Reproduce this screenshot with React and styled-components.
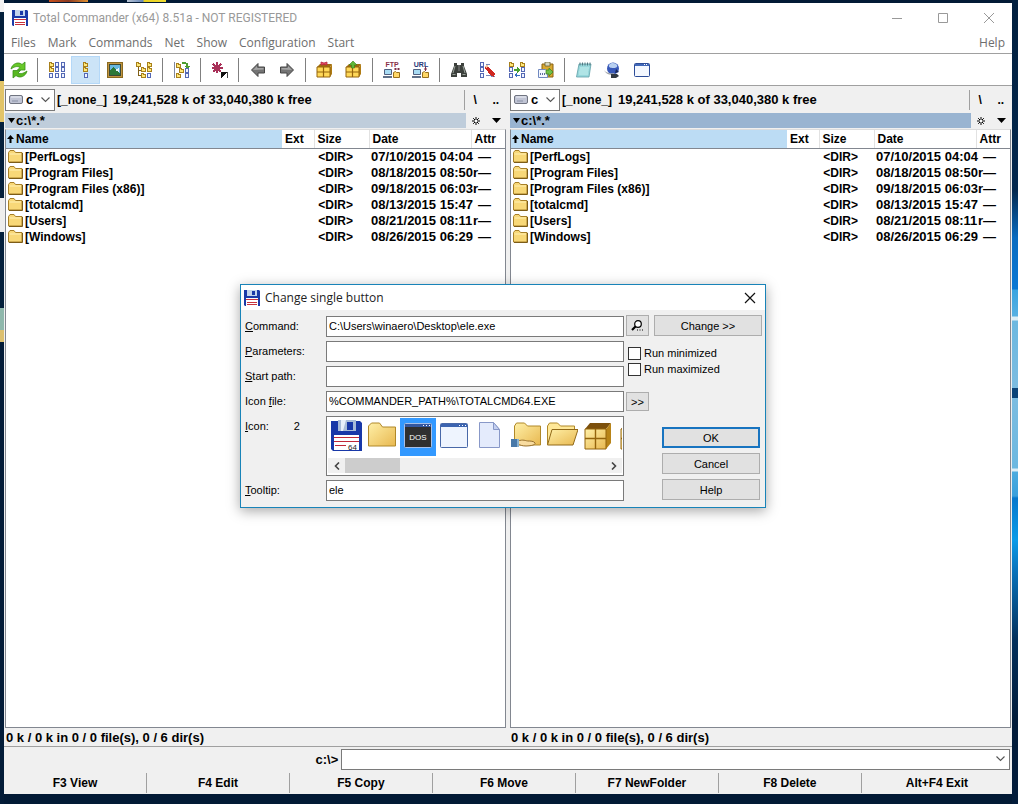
import styled, { createGlobalStyle, css } from "styled-components";

const GlobalStyle = createGlobalStyle`
  * {
    box-sizing: border-box;
  }

  body {
    margin: 0;
    font-family: "Liberation Sans", Arial, sans-serif;
    font-size: 12px;
    color: #000;
  }

  button, input, select {
    font: inherit;
    color: inherit;
    margin: 0;
    padding: 0;
    border: 0;
    border-radius: 0;
    background: transparent;
  }

  svg {
    display: block;
    flex: none;
  }
`;

/* ---------- desktop and main window ---------- */

const Desktop = styled.div`
  min-height: 100vh;
  display: flex;
  padding: 3px 6px 10px 4px;
  background-color: #021a35;
  background-image: linear-gradient(90deg, #c8501c, #8c3a20 50%, #e09030),
    linear-gradient(90deg, #b8c4d4, #6888b8 40%, #e8d020 45%, #f0dc30),
    linear-gradient(
      180deg,
      #f2f2f2 12px,
      #04203c 12px 81px,
      #e2c468 81px 122px,
      #04203c 122px 198px,
      #eee 198px 232px,
      #04203c 232px 308px,
      #8fb8ac 308px 330px,
      #dcc070 330px 342px,
      #031c38 342px
    ),
    linear-gradient(
      180deg,
      #02203f 0,
      #03284e 190px,
      #0a6cc0 238px,
      #0a78d4 289px,
      #3aa4e0 290px,
      #56b0e2 316px,
      #dceef6 317px 320px,
      #6cb8e0 321px,
      #7cbce0 388px,
      #0b4478 388px 398px,
      #7cbce0 398px,
      #6cb8e0 468px,
      #dceef6 469px 471px,
      #4cacdf 472px,
      #3aa0dc 496px,
      #0878cc 498px,
      #0a9be8 540px,
      #0a74bc 570px,
      #03305c 640px,
      #021c3a 720px
    );
  background-repeat: no-repeat;
  background-size: 39px 2px, 39px 2px, 4px 100%, 6px 100%;
  background-position: 49px 0, 127px 0, 0 0, 100% 0;
`;

const Window = styled.main`
  flex: 1;
  min-width: 0;
  display: flex;
  flex-direction: column;
  background: #f0f0f0;
`;

const TitleBar = styled.header`
  display: flex;
  align-items: center;
  height: 29px;
  padding-left: 8px;
  background: #fff;
  color: #999;
  font-family: Roboto, "Open Sans", sans-serif;
`;

const TitleText = styled.h1`
  flex: 1;
  margin: 0 0 0 5px;
  font-size: 12px;
  font-weight: 400;
`;

const CaptionButton = styled.button`
  width: 46px;
  height: 28px;
  display: flex;
  align-items: center;
  justify-content: center;
`;

const MenuBar = styled.nav`
  display: flex;
  gap: 12px;
  height: 22px;
  padding: 0 7px;
  background: #fff;
  border-bottom: 1px solid #a0a0a0;
  color: #6d6d6d;
  font-family: "Open Sans", "Noto Sans", sans-serif;
  font-size: 12px;
`;

const MenuItem = styled.button`
  height: 21px;
  line-height: 21px;
  ${(props) =>
    props.$last &&
    css`
      margin-left: auto;
    `}
`;

const ToolBar = styled.div`
  display: flex;
  align-items: center;
  height: 32px;
  background: #fff;
  border-bottom: 1px solid #a0a0a0;
`;

const ToolButton = styled.button`
  width: 29px;
  height: 28px;
  display: flex;
  align-items: center;
  justify-content: center;
  border: 1px solid ${(props) => (props.$active ? "#b4d8f8" : "transparent")};
  background: ${(props) => (props.$active ? "#cce4f7" : "transparent")};
`;

const ToolDivider = styled.span`
  width: 1px;
  height: 24px;
  margin: 0 4px;
  background: #808080;
`;

/* ---------- file panels ---------- */

const Panels = styled.div`
  flex: 1;
  display: grid;
  grid-template-columns: 1fr 1fr;
  gap: 4px;
  padding: 1px 1px 0;
`;

const Panel = styled.section`
  display: flex;
  flex-direction: column;
  min-width: 0;
  font-weight: 700;
`;

const DriveRow = styled.div`
  display: flex;
  align-items: center;
  height: 25px;
`;

const DriveBox = styled.label`
  display: flex;
  align-items: center;
  width: 50px;
  height: 22px;
  padding: 0 4px 0 3px;
  background: #fff;
  border: 1px solid #7a7a7a;
`;

const DriveSelect = styled.select`
  flex: 1;
  min-width: 0;
  padding-left: 3px;
  appearance: none;
  font-size: 13px;
  outline: none;
`;

const FreeSpace = styled.p`
  flex: 1;
  display: flex;
  gap: 6px;
  margin: 0;
  padding-left: 2px;
  font-size: 13px;
  line-height: 16px;
  white-space: nowrap;

  span {
    font-size: 12px;
  }
`;

const PanelButtons = styled.div`
  display: flex;
  align-items: center;
  justify-content: space-around;
  width: ${(props) => (props.$line ? "42px" : "40px")};
  height: 20px;
  border-left: ${(props) => (props.$line ? "1px solid #a0a0a0" : "0")};
`;

const SmallButton = styled.button`
  width: 18px;
  height: 16px;
  display: flex;
  align-items: center;
  justify-content: center;
  font-weight: 700;
`;

const PathRow = styled.div`
  display: flex;
  align-items: center;
  height: 17px;
`;

const PathBar = styled.div`
  flex: 1;
  display: flex;
  align-items: center;
  gap: 1px;
  height: 15px;
  padding-left: 3px;
  background: ${(props) => (props.$active ? "#99b4d1" : "#bfcddb")};
  font-size: 13px;
  line-height: 15px;
`;

const ListBox = styled.div`
  flex: 1;
  background: #fff;
  border: 1px solid #828790;
  border-top-color: #dcdcdc;
`;

const FileTable = styled.table`
  width: 100%;
  table-layout: fixed;
  border-collapse: collapse;
`;

const HeadCell = styled.th`
  width: ${(props) => props.$width || "auto"};
  height: 18px;
  padding: 0 0 0 3px;
  text-align: left;
  white-space: nowrap;
  border-bottom: 1px solid #828790;
  border-left: ${(props) => (props.$line ? "1px solid #e2e2e2" : "0")};
  background: ${(props) => (props.$sorted ? "#bcdcf4" : "#fff")};

  div {
    display: flex;
    align-items: center;
    gap: 2px;
    margin-left: -2px;
  }
`;

const FileRow = styled.tr`
  height: 16px;
`;

const Cell = styled.td`
  padding: 0;
  height: 16px;
  line-height: 16px;
  white-space: nowrap;
`;

const NameCell = styled(Cell)`
  div {
    display: flex;
    align-items: center;
    gap: 2px;
    padding-left: 2px;
  }
`;

const SizeCell = styled(Cell)`
  padding-right: 16px;
  text-align: right;
`;

const DateCell = styled(Cell)`
  padding-left: 2px;
  font-size: 13px;
`;

const AttrCell = styled(Cell)`
  padding-right: 14px;
  text-align: right;
  font-size: 13px;
`;

const StatusLine = styled.p`
  margin: 0;
  height: 18px;
  padding-left: 1px;
  font-size: 13px;
  font-weight: 700;
  line-height: 20px;
`;

/* ---------- bottom bars ---------- */

const CommandRow = styled.form`
  display: grid;
  grid-template-columns: 1fr 2fr;
  align-items: center;
  gap: 3px;
  height: 25px;
  padding-right: 2px;
  border-top: 1px solid #a0a0a0;
  font-size: 13px;
  font-weight: 700;

  label {
    text-align: right;
  }
`;

const CommandBox = styled.div`
  display: flex;
  align-items: center;
  height: 21px;
  background: #fff;
  border: 1px solid #7a7a7a;

  input {
    flex: 1;
    min-width: 0;
    height: 100%;
    padding: 0 4px;
    outline: none;
  }

  button {
    padding: 0 4px;
  }
`;

const FunctionBar = styled.footer`
  display: grid;
  grid-template-columns: repeat(6, 1fr) 1.05fr;
  height: 23px;
  padding: 2px 0 1px;
`;

const FunctionKey = styled.button`
  font-size: 12px;
  font-weight: 700;
  border-right: 1px solid #a0a0a0;

  &:last-child {
    border-right: 0;
  }
`;

/* ---------- dialog ---------- */

const Dialog = styled.section`
  position: absolute;
  left: 240px;
  top: 284px;
  width: 526px;
  background: #f0f0f0;
  border: 1px solid #1883b8;
  box-shadow: 0 3px 12px rgba(0, 0, 0, 0.35);
  font-size: 11px;
`;

const DialogTitle = styled.header`
  display: flex;
  align-items: center;
  height: 25px;
  padding: 0 9px 0 3px;
  background: #fff;
  font-family: "Open Sans", "Noto Sans", sans-serif;

  h2 {
    flex: 1;
    margin: 0 0 0 5px;
    font-size: 12px;
    font-weight: 400;
    color: #222;
  }
`;

const DialogBody = styled.form`
  display: flex;
`;

const Fields = styled.div`
  flex: 1;
  display: grid;
  grid-template-columns: 81px 1fr;
  row-gap: 4px;
  padding: 6px 2px 6px 4px;
`;

const FieldLabel = styled.label`
  line-height: 21px;

  span {
    margin-left: 25px;
  }
`;

const TextField = styled.input`
  width: 100%;
  height: 21px;
  padding: 0 2px 2px;
  background: #fff;
  border: 1px solid #7a7a7a;
  outline: none;
`;

const IconPicker = styled.div`
  height: 60px;
  padding: 1px 1px 2px;
  background: #fff;
  border: 1px solid #7a7a7a;
  overflow: hidden;
`;

const IconStrip = styled.div`
  display: flex;
  height: 40px;
  overflow: hidden;
`;

const IconChoice = styled.button`
  flex: none;
  width: 36px;
  height: 38px;
  display: flex;
  justify-content: center;
  padding-top: 2px;
  background: ${(props) => (props.$active ? "#3399ff" : "transparent")};
`;

const ScrollBar = styled.div`
  display: flex;
  height: 15px;
  background: #f0f0f0;

  button {
    width: 17px;
    display: flex;
    align-items: center;
    justify-content: center;
  }
`;

const ScrollTrack = styled.div`
  flex: 1;
`;

const ScrollThumb = styled.div`
  width: 21%;
  height: 100%;
  background: #cdcdcd;
`;

const Side = styled.div`
  width: 139px;
  display: flex;
  flex-direction: column;
  padding: 5px 3px 6px 0;
`;

const SideRow = styled.div`
  display: flex;
  gap: 5px;
`;

const CheckGroup = styled.div`
  padding: 9px 0 15px 2px;
`;

const CheckLabel = styled.label`
  display: flex;
  align-items: center;
  gap: 3px;
  height: 16px;
`;

const CheckBox = styled.input`
  appearance: none;
  width: 13px;
  height: 13px;
  background: #fff;
  border: 1px solid #333;

  &:checked {
    background: #333;
    box-shadow: inset 0 0 0 2px #fff;
  }
`;

const PushButton = styled.button`
  flex: ${(props) => (props.$square ? "none" : "1")};
  width: ${(props) => (props.$square ? "23px" : "auto")};
  height: ${(props) => (props.$short ? "19px" : "21px")};
  display: flex;
  align-items: center;
  justify-content: center;
  background: #e1e1e1;
  border: ${(props) => (props.$primary ? "2px solid #1874c0" : "1px solid #adadad")};
`;

const Actions = styled.div`
  display: flex;
  flex-direction: column;
  gap: 5px;
  margin-top: 16px;
  padding: 0 2px 0 36px;

  button {
    flex: none;
  }
`;

/* ---------- icons ---------- */

const Floppy = () => (
  <svg width="16" height="16" viewBox="0 0 16 16">
    <path d="M0 0h15l1 1v15H1L0 15z" fill="#1c3aa8" />
    <path d="M3 0h10v6H3z" fill="#c4d4ec" />
    <path d="M8 1h3v4H8z" fill="#1c3aa8" />
    <path d="M2 8h12v8H2z" fill="#fff" />
    <path d="M2 9h12v1H2zM3 12h10v1H3zM3 14h10v1H3z" fill="#c8323c" />
  </svg>
);

const Chevron = () => (
  <svg width="9" height="6" viewBox="0 0 9 6">
    <path d="M0.5 0.5l4 4 4-4" fill="none" stroke="#555" strokeWidth="1.1" />
  </svg>
);

const MiniFolder = ({ x, y }) => (
  <g transform={`translate(${x} ${y})`}>
    <path d="M0 0h3v1h2v4H0z" fill="#a8801c" />
    <path d="M1 1h1v1h2v2H1z" fill="#ffe878" />
  </g>
);

const MiniPage = ({ x, y }) => (
  <g transform={`translate(${x} ${y})`}>
    <path d="M0 0h3l1 1v4H0z" fill="#5468b4" />
    <path d="M1 1h2v3H1z" fill="#f0f4ff" />
  </g>
);

const Crisp = ({ children, size = 16 }) => (
  <svg width={size} height={size} viewBox="0 0 16 16" shapeRendering="crispEdges">
    {children}
  </svg>
);

const RefreshIcon = () => (
  <svg width="18" height="18" viewBox="0 0 18 18">
    <path
      d="M1 8C2 3 8 0 12 3.500L15 1v8H7.500l2.500-2.500C7 4.500 4 6 1 8z"
      fill="#68c828"
      stroke="#389018"
      strokeWidth="0.8"
    />
    <path
      d="M17 10c-1 5-7 8-11 4.500L3 17V9.500h7.500L8 12c3 1.500 6 0 9-2z"
      fill="#58b820"
      stroke="#389018"
      strokeWidth="0.8"
    />
  </svg>
);

const BriefIcon = () => (
  <Crisp>
    <MiniFolder x={0} y={0} />
    <MiniFolder x={0} y={5} />
    <MiniPage x={0} y={11} />
    <MiniPage x={6} y={0} />
    <MiniPage x={6} y={5} />
    <MiniPage x={6} y={11} />
    <MiniPage x={12} y={0} />
    <MiniPage x={12} y={5} />
    <MiniPage x={12} y={11} />
  </Crisp>
);

const FullIcon = () => (
  <Crisp>
    <MiniFolder x={5} y={0} />
    <MiniFolder x={5} y={5} />
    <MiniPage x={6} y={11} />
  </Crisp>
);

const PictureIcon = () => (
  <Crisp>
    <path d="M0 0h16v16H0z" fill="#8a6a20" />
    <path d="M1 1h14v14H1z" fill="#c09440" />
    <path d="M2 2h12v12H2z" fill="#3a4a38" />
    <path d="M3 3h10v10H3z" fill="#68b8e0" />
    <path d="M3 9l3-4 7 7v1H3z" fill="#2c7838" />
    <path d="M8 8l4-2v4z" fill="#e8f4fa" />
  </Crisp>
);

const TreeIcon = () => (
  <Crisp>
    <path d="M2 5v8h4M2 8h4" fill="none" stroke="#806018" />
    <MiniFolder x={0} y={0} />
    <MiniFolder x={5} y={5} />
    <MiniFolder x={5} y={11} />
    <MiniFolder x={11} y={0} />
    <MiniFolder x={11} y={5} />
    <MiniPage x={11} y={11} />
  </Crisp>
);

const BranchIcon = () => (
  <Crisp>
    <path d="M0 0h1v16H0z" fill="#8088a0" />
    <MiniFolder x={2} y={1} />
    <MiniFolder x={5} y={6} />
    <MiniFolder x={2} y={11} />
    <path d="M8 0h4v1h2v3h2l-3 3-3-3h2V2H8z" fill="#4c9c30" />
    <MiniPage x={11} y={6} />
    <MiniPage x={11} y={11} />
  </Crisp>
);

const InvertIcon = () => (
  <Crisp>
    <path
      d="M5 0v11M0 5.500h11M1 2l8 8M9 2l-8 8"
      stroke="#a83058"
      strokeWidth="2"
      fill="none"
    />
    <path d="M9 10h6v6H9z" fill="#fff" stroke="#444" />
    <path d="M9 10h6l-6 6z" fill="#111" />
  </Crisp>
);

const ArrowIcon = ({ right }) => (
  <svg width="14" height="14" viewBox="0 0 14 14">
    <g transform={right ? "matrix(-1 0 0 1 14 0)" : undefined}>
      <path d="M0.500 7L7 0.500V4h6.500v6H7v3.500z" fill="#747474" stroke="#444" />
      <path d="M2 7l4-4v2h6.500v1.500z" fill="#a4a4a4" />
    </g>
  </svg>
);

const BoxIcon = ({ unpack }) => (
  <svg width="17" height="17" viewBox="0 0 17 17">
    <path d="M1 6l3-3h12l-2 3z" fill="#a06c10" />
    <path d="M14 6l2-3v10l-2 3z" fill="#b07c14" />
    <path d="M1 6h13v10H1z" fill="#ffd858" stroke="#94640c" />
    <path d="M7.500 6v10M1 11h13" stroke="#94640c" strokeWidth="1.200" />
    {unpack ? (
      <path d="M8 0l4 4H9.500v3h-3V4H4z" fill="#60b838" stroke="#388018" strokeWidth="0.600" />
    ) : (
      <path d="M5 1l3 1 3-1v3L8 3.500 5 4z" fill="#e84860" stroke="#b02840" strokeWidth="0.800" />
    )}
  </svg>
);

const NetIcon = ({ label, color, arrows }) => (
  <svg width="18" height="18" viewBox="0 0 18 18">
    <text
      x="9"
      y="6"
      textAnchor="middle"
      fontFamily="Liberation Sans, sans-serif"
      fontSize="7"
      fontWeight="700"
      fill={color}
    >
      {label}
    </text>
    <path d="M1.500 8.500h7v5h-7z" fill="#a8dcf4" stroke="#506080" />
    <path d="M0 15h9v2H0z" fill="#607088" />
    <path d="M10.500 11.500l2-1 1 1h3v5h-6z" fill="#ffd868" stroke="#98701c" />
    <path d={arrows ? "M11 8h6M12.500 7v2M15.500 7v2" : "M13.500 6v4M12 8h3"} stroke="#803048" />
  </svg>
);

const BinocularsIcon = () => (
  <svg width="16" height="16" viewBox="0 0 16 16">
    <path d="M3 1h3v2h4V1h3v3l3 8v3h-6v-4H6v4H0v-3l3-8z" fill="#3c403c" />
    <path d="M4 4l-2 7M12 4l2 7M1.500 12.500h3M11.500 12.500h3" stroke="#98a098" fill="none" />
    <path d="M8 3v6" stroke="#888" />
  </svg>
);

const RenameIcon = () => (
  <Crisp>
    <MiniPage x={0} y={0} />
    <MiniPage x={0} y={5} />
    <MiniPage x={0} y={11} />
    <path d="M6 2h4M6 13h5M11 14h4" stroke="#7888b8" />
    <path d="M5 4l2-1 8 9-1 3-3-1-6-8z" fill="#d02820" />
    <path d="M5 4l2-1 1 1-2 2z" fill="#f0c8a0" />
  </Crisp>
);

const SyncIcon = () => (
  <Crisp>
    <MiniFolder x={0} y={0} />
    <MiniFolder x={11} y={0} />
    <MiniPage x={0} y={5} />
    <MiniPage x={12} y={5} />
    <MiniPage x={0} y={11} />
    <MiniPage x={12} y={11} />
    <path d="M5 7h3V5l3 3-3 3V9H5z" fill="#48a030" />
    <path d="M11 13H8v-2l-3 2 3 3v-2h3z" fill="#3870c0" />
  </Crisp>
);

const ClipboardIcon = () => (
  <svg width="16" height="16" viewBox="0 0 16 16">
    <path d="M4 2h11v13H4z" fill="#d8a830" stroke="#886010" />
    <path d="M7 0h5v4H7z" fill="#d8d8c0" stroke="#686030" strokeWidth="0.800" />
    <path d="M0.500 7.500h7l2 2v6h-9z" fill="#f4f8ff" stroke="#7088c0" />
    <path d="M2 12h1M4 12h1M6 12h1" stroke="#304080" strokeWidth="1.400" />
    <path d="M8 8h3V6l4 4-4 4v-2H8z" fill="#70c048" stroke="#388020" strokeWidth="0.700" />
  </svg>
);

const NotepadIcon = () => (
  <svg width="16" height="16" viewBox="0 0 16 16">
    <path d="M3 2h12l-2 13H0.500z" fill="#98d8dc" stroke="#60a0a8" strokeWidth="0.800" />
    <path d="M4 6h9M3.500 8h9M3 10h9M3 12h9" stroke="#c8f0f0" />
    <path d="M4 0.500v3M6.500 0.500v3M9 0.500v3M11.500 0.500v3M14 0.500v3" stroke="#507880" />
  </svg>
);

const GlobeIcon = () => (
  <svg width="17" height="16" viewBox="0 0 17 16">
    <circle cx="9" cy="6.500" r="6" fill="#3858b8" />
    <path d="M5 3c2-3 7-2 8 0 1 2-1 3-3 3S4 6 5 3z" fill="#b8d0f0" />
    <path d="M0 7c0 3 5 5 10 4l1 1.500C6 14 0 11 0 7z" fill="#a0a4a8" />
    <path d="M7 12h6l2 2-3 2H7z" fill="#303840" />
    <path d="M12 7l3 3-4 1z" fill="#182858" />
  </svg>
);

const WindowIcon = () => (
  <svg width="16" height="14" viewBox="0 0 16 14">
    <rect x="0.500" y="0.500" width="15" height="13" rx="1" fill="#f4f8ff" stroke="#2c4c98" />
    <path d="M1 1h14v2H1z" fill="#4068b8" />
    <path d="M10 1h1v1h-1zM12 1h1v1h-1z" fill="#fff" />
  </svg>
);

const DriveIcon = () => (
  <svg width="14" height="9" viewBox="0 0 14 9">
    <rect x="0.500" y="0.500" width="13" height="8" rx="1.500" fill="#c0c4d4" stroke="#707480" />
    <path d="M2 2h10" stroke="#eef0f6" />
    <path d="M3 6h6" stroke="#8890a4" />
  </svg>
);

const FolderIcon = () => (
  <svg width="15" height="13" viewBox="0 0 15 13">
    <path
      d="M0.500 12V2.500l1.500-2h4l1.500 2h6.500V12z"
      fill="#f8d878"
      stroke="#a88028"
      strokeLinejoin="round"
    />
    <path d="M1.500 4h11.500" stroke="#fff0b4" />
    <path d="M1 12.500h13.500V3" stroke="#7c5c18" fill="none" />
  </svg>
);

const Star = () => (
  <svg width="8" height="8" viewBox="0 0 8 8">
    <path d="M4 0v8M0 4h8M1.200 1.200l5.600 5.600M6.800 1.200L1.200 6.800" stroke="#000" />
    <rect x="3" y="3" width="2" height="2" fill="#fff" />
  </svg>
);

const Triangle = ({ width }) => (
  <svg width={width} height="5" viewBox="0 0 10 5" preserveAspectRatio="none">
    <path d="M0 0h10L5 5z" />
  </svg>
);

const SortArrow = () => (
  <svg width="7" height="8" viewBox="0 0 7 8">
    <path d="M3.500 0L7 4H4.500v4h-2V4H0z" />
  </svg>
);

const MagnifierIcon = () => (
  <svg width="13" height="12" viewBox="0 0 13 12">
    <circle cx="7" cy="4" r="3.300" fill="#fff" stroke="#000" strokeWidth="1.200" />
    <path d="M4.500 6.500L1 10" stroke="#000" strokeWidth="2.200" />
    <path d="M6 10h1M8.500 10h1M11 10h1" stroke="#000" strokeWidth="1.200" />
  </svg>
);

const BigFloppy = () => (
  <svg width="32" height="32" viewBox="0 0 32 32">
    <path d="M1 1h29l2 2v28H3l-2-2z" fill="#1838a8" />
    <path d="M8 0h18v11H8z" fill="#a8bcd8" />
    <path d="M11 0h5l-3 11h-2z" fill="#e8f0fa" />
    <path d="M17 2h6v8h-6z" fill="#1838a8" />
    <path d="M4 15h25v15H4z" fill="#fff" />
    <path d="M4 17.500h25M4 21.500h25M5 25.500h11" stroke="#c02838" />
    <text x="18" y="30" fontFamily="Liberation Sans, sans-serif" fontSize="8" fill="#222">
      64
    </text>
  </svg>
);

const BigFolder = () => (
  <svg width="30" height="28" viewBox="0 0 30 28">
    <defs>
      <linearGradient id="gold" x1="0" y1="0" x2="1" y2="1">
        <stop offset="0" stopColor="#fff0a8" />
        <stop offset="1" stopColor="#e8b850" />
      </linearGradient>
    </defs>
    <path d="M1.500 26V6l3-3h8l3 4h13v19z" fill="url(#gold)" stroke="#b08828" />
  </svg>
);

const SharedFolder = () => (
  <svg width="32" height="28" viewBox="0 0 32 28">
    <path d="M4.500 25V6l2-3h8l3 3h13v19z" fill="url(#gold)" stroke="#b08828" />
    <path d="M8 21c5-2 8 0 10 0s6 0 7 2-5 3-9 3-6-1-8-2z" fill="#f8dca0" stroke="#98702c" />
    <path d="M1 19h8v8H1z" fill="#4878a8" />
    <path d="M7 19h2v8H7z" fill="#88b0d0" />
  </svg>
);

const OpenFolder = () => (
  <svg width="32" height="28" viewBox="0 0 32 28">
    <path d="M1.500 24V6l2-3h8l3 3h14v5" fill="#ffe898" stroke="#b08828" />
    <path d="M1.500 25L6 9.500h26L27 25z" fill="url(#gold)" stroke="#906818" />
  </svg>
);

const DosWindow = () => (
  <svg width="28" height="28" viewBox="0 0 28 28">
    <rect x="0.500" y="3.500" width="27" height="24" rx="1" fill="#303030" stroke="#a8c0e8" />
    <path d="M1 4h26v3H1z" fill="#3458a0" />
    <path d="M19 5h1v1h-1zM22 5h1v1h-1zM25 5h1v1h-1z" fill="#fff" />
    <text
      x="14"
      y="20"
      textAnchor="middle"
      fontFamily="Liberation Sans, sans-serif"
      fontSize="8"
      fill="#fff"
    >
      DOS
    </text>
  </svg>
);

const PlainWindow = () => (
  <svg width="28" height="28" viewBox="0 0 28 28">
    <rect x="0.500" y="3.500" width="27" height="24" rx="1" fill="#eef4fe" stroke="#4868a8" />
    <path d="M1 4h26v3H1z" fill="#3c64b0" />
    <path d="M19 5h1v1h-1zM22 5h1v1h-1zM25 5h1v1h-1z" fill="#fff" />
  </svg>
);

const PageIcon = () => (
  <svg width="22" height="29" viewBox="0 0 22 29">
    <path d="M0.500 2.500h14l6 7v18h-20z" fill="#e4ebfc" stroke="#8898c8" />
    <path d="M14.500 2.500v7h6z" fill="#c4d0f0" stroke="#8898c8" />
  </svg>
);

const BigBox = () => (
  <svg width="28" height="30" viewBox="0 0 28 30">
    <path d="M1 9l5-6h21l-5 6z" fill="#7c500c" />
    <path d="M22 9l5-6v20l-5 6z" fill="#b88418" />
    <path d="M1 9h21v20H1z" fill="url(#gold)" stroke="#94640c" />
    <path d="M11.500 9v20M1 18.500h21" stroke="#94640c" strokeWidth="1.400" />
  </svg>
);

/* ---------- data ---------- */

const menu = ["Files", "Mark", "Commands", "Net", "Show", "Configuration", "Start"];

const tools = [
  [{ name: "Refresh", icon: <RefreshIcon /> }],
  [
    { name: "Brief", icon: <BriefIcon /> },
    { name: "Full", icon: <FullIcon />, active: true },
    { name: "Thumbnails", icon: <PictureIcon /> },
    { name: "Tree", icon: <TreeIcon /> },
  ],
  [{ name: "Branch view", icon: <BranchIcon /> }],
  [{ name: "Invert selection", icon: <InvertIcon /> }],
  [
    { name: "Back", icon: <ArrowIcon /> },
    { name: "Forward", icon: <ArrowIcon right /> },
  ],
  [
    { name: "Pack", icon: <BoxIcon /> },
    { name: "Unpack", icon: <BoxIcon unpack /> },
  ],
  [
    { name: "FTP connect", icon: <NetIcon label="FTP" color="#883048" arrows /> },
    { name: "FTP new connection", icon: <NetIcon label="URL" color="#283878" /> },
  ],
  [
    { name: "Search", icon: <BinocularsIcon /> },
    { name: "Multi-rename", icon: <RenameIcon /> },
    { name: "Synchronize", icon: <SyncIcon /> },
    { name: "Copy names", icon: <ClipboardIcon /> },
  ],
  [
    { name: "Notepad", icon: <NotepadIcon /> },
    { name: "Network", icon: <GlobeIcon /> },
    { name: "Window", icon: <WindowIcon /> },
  ],
];

const files = [
  { name: "PerfLogs", date: "07/10/2015 04:04", attr: "—" },
  { name: "Program Files", date: "08/18/2015 08:50", attr: "r—" },
  { name: "Program Files (x86)", date: "09/18/2015 06:03", attr: "r—" },
  { name: "totalcmd", date: "08/13/2015 15:47", attr: "—" },
  { name: "Users", date: "08/21/2015 08:11", attr: "r—" },
  { name: "Windows", date: "08/26/2015 06:29", attr: "—" },
];

const keys = [
  "F3 View",
  "F4 Edit",
  "F5 Copy",
  "F6 Move",
  "F7 NewFolder",
  "F8 Delete",
  "Alt+F4 Exit",
];

const choices = [
  BigFloppy,
  BigFolder,
  DosWindow,
  PlainWindow,
  PageIcon,
  SharedFolder,
  OpenFolder,
  BigBox,
  BigBox,
];

/* ---------- parts ---------- */

function FilePanel({ active }) {
  return (
    <Panel>
      <DriveRow>
        <DriveBox>
          <DriveIcon />
          <DriveSelect aria-label="Drive" defaultValue="c">
            <option>c</option>
          </DriveSelect>
          <Chevron />
        </DriveBox>
        <FreeSpace>
          <span>[_none_]</span>19,241,528 k of 33,040,380 k free
        </FreeSpace>
        <PanelButtons $line>
          <SmallButton>\</SmallButton>
          <SmallButton>..</SmallButton>
        </PanelButtons>
      </DriveRow>
      <PathRow>
        <PathBar $active={active}>
          <Triangle width={7} />
          c:\*.*
        </PathBar>
        <PanelButtons>
          <SmallButton aria-label="Favourites">
            <Star />
          </SmallButton>
          <SmallButton aria-label="History">
            <Triangle width={9} />
          </SmallButton>
        </PanelButtons>
      </PathRow>
      <ListBox>
        <FileTable>
          <thead>
            <tr>
              <HeadCell $sorted>
                <div>
                  <SortArrow />
                  Name
                </div>
              </HeadCell>
              <HeadCell $width="32px">Ext</HeadCell>
              <HeadCell $width="55px" $line>
                Size
              </HeadCell>
              <HeadCell $width="102px" $line>
                Date
              </HeadCell>
              <HeadCell $width="34px" $line>
                Attr
              </HeadCell>
            </tr>
          </thead>
          <tbody>
            {files.map((file) => (
              <FileRow key={file.name}>
                <NameCell>
                  <div>
                    <FolderIcon />[{file.name}]
                  </div>
                </NameCell>
                <Cell />
                <SizeCell>&lt;DIR&gt;</SizeCell>
                <DateCell>{file.date}</DateCell>
                <AttrCell>{file.attr}</AttrCell>
              </FileRow>
            ))}
          </tbody>
        </FileTable>
      </ListBox>
      <StatusLine>0 k / 0 k in 0 / 0 file(s), 0 / 6 dir(s)</StatusLine>
    </Panel>
  );
}

function ButtonDialog() {
  return (
    <Dialog role="dialog" aria-labelledby="dialog-title">
      <DialogTitle>
        <Floppy />
        <h2 id="dialog-title">Change single button</h2>
        <button aria-label="Close">
          <svg width="12" height="12" viewBox="0 0 12 12">
            <path d="M1 1l10 10M11 1L1 11" stroke="#111" strokeWidth="1.200" />
          </svg>
        </button>
      </DialogTitle>
      <DialogBody onSubmit={(e) => e.preventDefault()}>
        <Fields>
          <FieldLabel htmlFor="command">
            <u>C</u>ommand:
          </FieldLabel>
          <TextField id="command" defaultValue="C:\Users\winaero\Desktop\ele.exe" />
          <FieldLabel htmlFor="parameters">
            <u>P</u>arameters:
          </FieldLabel>
          <TextField id="parameters" />
          <FieldLabel htmlFor="start">
            <u>S</u>tart path:
          </FieldLabel>
          <TextField id="start" />
          <FieldLabel htmlFor="iconfile">
            Icon <u>f</u>ile:
          </FieldLabel>
          <TextField id="iconfile" defaultValue="%COMMANDER_PATH%\TOTALCMD64.EXE" />
          <FieldLabel as="div">
            <u>I</u>con:<span>2</span>
          </FieldLabel>
          <IconPicker>
            <IconStrip>
              {choices.map((Icon, i) => (
                <IconChoice key={i} type="button" $active={i === 2} aria-label={`Icon ${i}`}>
                  <Icon />
                </IconChoice>
              ))}
            </IconStrip>
            <ScrollBar>
              <button type="button" aria-label="Scroll left">
                <svg width="6" height="8" viewBox="0 0 6 8">
                  <path d="M5 0.500L1.500 4 5 7.500" fill="none" stroke="#444" strokeWidth="1.600" />
                </svg>
              </button>
              <ScrollTrack>
                <ScrollThumb />
              </ScrollTrack>
              <button type="button" aria-label="Scroll right">
                <svg width="6" height="8" viewBox="0 0 6 8">
                  <path d="M1 0.500L4.500 4 1 7.500" fill="none" stroke="#444" strokeWidth="1.600" />
                </svg>
              </button>
            </ScrollBar>
          </IconPicker>
          <FieldLabel htmlFor="tooltip">
            <u>T</u>ooltip:
          </FieldLabel>
          <TextField id="tooltip" defaultValue="ele" />
        </Fields>
        <Side>
          <SideRow>
            <PushButton type="button" $square aria-label="Browse">
              <MagnifierIcon />
            </PushButton>
            <PushButton type="button">Change &gt;&gt;</PushButton>
          </SideRow>
          <CheckGroup>
            <CheckLabel>
              <CheckBox type="checkbox" />
              Run minimized
            </CheckLabel>
            <CheckLabel>
              <CheckBox type="checkbox" />
              Run maximized
            </CheckLabel>
          </CheckGroup>
          <SideRow>
            <PushButton type="button" $square $short>
              &gt;&gt;
            </PushButton>
          </SideRow>
          <Actions>
            <PushButton $primary>OK</PushButton>
            <PushButton type="button">Cancel</PushButton>
            <PushButton type="button">Help</PushButton>
          </Actions>
        </Side>
      </DialogBody>
    </Dialog>
  );
}

export default function App() {
  return (
    <Desktop>
      <GlobalStyle />
      <Window>
        <TitleBar>
          <Floppy />
          <TitleText>Total Commander (x64) 8.51a - NOT REGISTERED</TitleText>
          <CaptionButton aria-label="Minimize">
            <svg width="10" height="10" viewBox="0 0 10 10">
              <path d="M0 5.500h10" stroke="#999" />
            </svg>
          </CaptionButton>
          <CaptionButton aria-label="Maximize">
            <svg width="10" height="10" viewBox="0 0 10 10">
              <path d="M0.500 0.500h9v9h-9z" fill="none" stroke="#999" />
            </svg>
          </CaptionButton>
          <CaptionButton aria-label="Close">
            <svg width="12" height="12" viewBox="0 0 12 12">
              <path d="M1 1l10 10M11 1L1 11" stroke="#999" />
            </svg>
          </CaptionButton>
        </TitleBar>
        <MenuBar>
          {menu.map((item) => (
            <MenuItem key={item}>{item}</MenuItem>
          ))}
          <MenuItem $last>Help</MenuItem>
        </MenuBar>
        <ToolBar>
          {tools.map((group, i) => [
            i > 0 && <ToolDivider key={`line-${i}`} />,
            ...group.map((tool) => (
              <ToolButton key={tool.name} $active={tool.active} aria-label={tool.name}>
                {tool.icon}
              </ToolButton>
            )),
          ])}
        </ToolBar>
        <Panels>
          <FilePanel />
          <FilePanel active />
        </Panels>
        <CommandRow onSubmit={(e) => e.preventDefault()}>
          <label htmlFor="cmdline">c:\&gt;</label>
          <CommandBox>
            <input id="cmdline" />
            <button type="button" aria-label="Command history">
              <Chevron />
            </button>
          </CommandBox>
        </CommandRow>
        <FunctionBar>
          {keys.map((key) => (
            <FunctionKey key={key}>{key}</FunctionKey>
          ))}
        </FunctionBar>
      </Window>
      <ButtonDialog />
    </Desktop>
  );
}
